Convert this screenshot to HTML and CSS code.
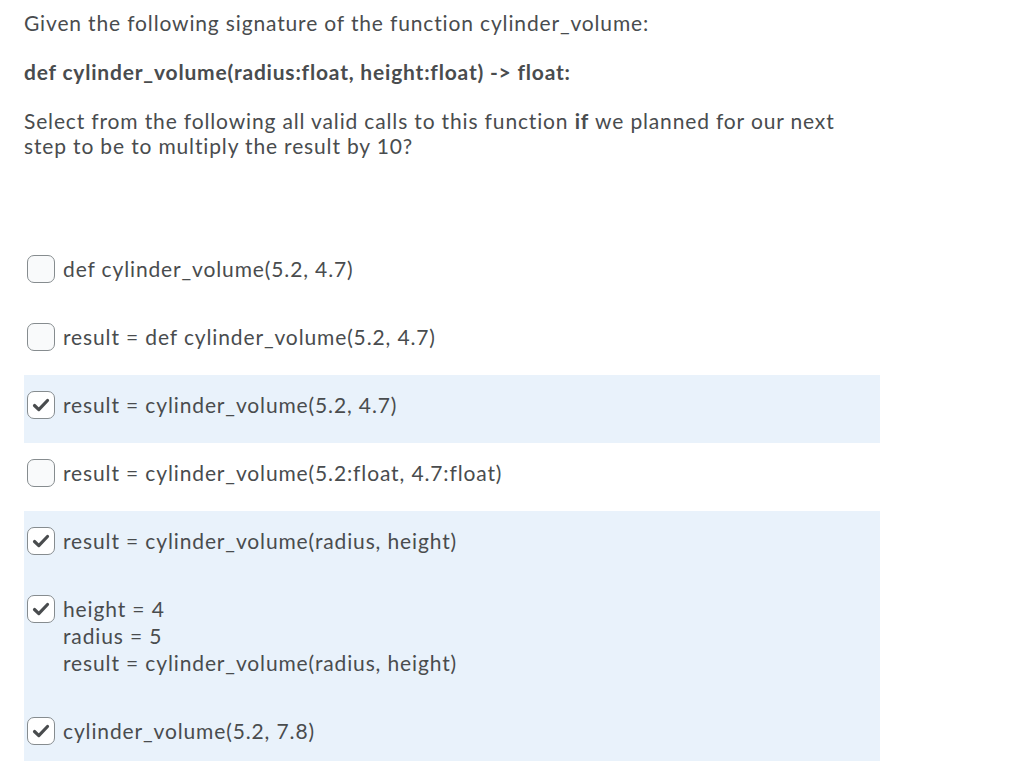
FILE: index.html
```html
<!DOCTYPE html>
<html>
<head>
<meta charset="utf-8">
<link rel="stylesheet" href="styles.css">
</head>
<body>
<div class="page">
  <p class="q">Given the following signature of the function cylinder_volume:</p>
  <p class="q sig">def cylinder_volume(radius:float, height:float) -&gt; float:</p>
  <p class="q">Select from the following all valid calls to this function <b>if</b> we planned for our next step to be to multiply the result by 10?</p>

  <ul class="options">
    <li class="opt"><span class="box"></span><span class="label">def cylinder_volume(5.2, 4.7)</span></li>
    <li class="opt"><span class="box"></span><span class="label">result = def cylinder_volume(5.2, 4.7)</span></li>
    <li class="opt on"><span class="box"><svg viewBox="0 0 28 28" width="28" height="28"><path d="M7.5 14.5 L11.8 18.6 L20.5 9.5" fill="none" stroke="#494c4e" stroke-width="3.2" stroke-linecap="round" stroke-linejoin="round"/></svg></span><span class="label">result = cylinder_volume(5.2, 4.7)</span></li>
    <li class="opt"><span class="box"></span><span class="label">result = cylinder_volume(5.2:float, 4.7:float)</span></li>
    <li class="opt on"><span class="box"><svg viewBox="0 0 28 28" width="28" height="28"><path d="M7.5 14.5 L11.8 18.6 L20.5 9.5" fill="none" stroke="#494c4e" stroke-width="3.2" stroke-linecap="round" stroke-linejoin="round"/></svg></span><span class="label">result = cylinder_volume(radius, height)</span></li>
    <li class="opt on"><span class="box"><svg viewBox="0 0 28 28" width="28" height="28"><path d="M7.5 14.5 L11.8 18.6 L20.5 9.5" fill="none" stroke="#494c4e" stroke-width="3.2" stroke-linecap="round" stroke-linejoin="round"/></svg></span><span class="label">height = 4<br>radius = 5<br>result = cylinder_volume(radius, height)</span></li>
    <li class="opt on"><span class="box"><svg viewBox="0 0 28 28" width="28" height="28"><path d="M7.5 14.5 L11.8 18.6 L20.5 9.5" fill="none" stroke="#494c4e" stroke-width="3.2" stroke-linecap="round" stroke-linejoin="round"/></svg></span><span class="label">cylinder_volume(5.2, 7.8)</span></li>
  </ul>
</div>
</body>
</html>
```

FILE: styles.css
```css
html, body {
  margin: 0;
  padding: 0;
  background: #ffffff;
}
body {
  font-family: Lato, "Open Sans", sans-serif;
  color: #494c4e;
}
.page {
  padding: 10px 0 0 24px;
  width: 856px;
}
.q {
  font-size: 21px;
  letter-spacing: 0.85px;
  line-height: 25px;
  margin: 0 0 24px 0;
  width: 840px;
}
.q b { font-weight: 700; }
.sig { font-weight: 700; letter-spacing: 0.8px; }
.options {
  list-style: none;
  margin: 81px 0 0 0;
  padding: 0;
}
.opt {
  display: flex;
  align-items: flex-start;
  padding: 16px 0 25px 0;
  font-size: 21px;
  letter-spacing: 0.87px;
  line-height: 27px;
}
.opt.on {
  background: #e9f2fb;
}
.box {
  flex: none;
  box-sizing: border-box;
  width: 28px;
  height: 28px;
  margin: 0 8px -1px 3px;
  border: 1px solid #868c8f;
  border-radius: 7px;
  background: #f9fafb;
  position: relative;
}
.box svg {
  position: absolute;
  left: -1px;
  top: -1px;
}
.opt.on .box {
  background: #ffffff;
}
```
